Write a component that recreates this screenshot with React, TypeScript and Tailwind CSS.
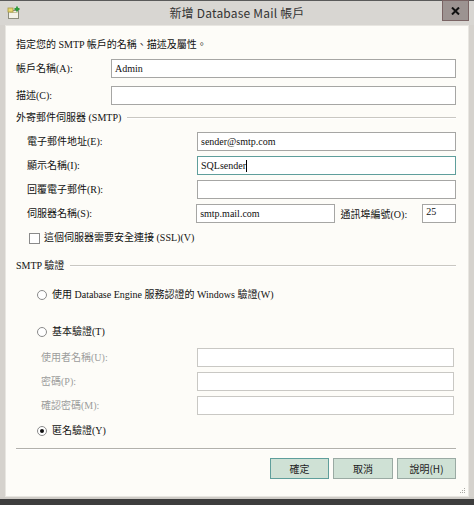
import React from "react";

const body = "font-['Liberation_Serif','Noto_Sans_CJK_TC',serif] text-[10px] leading-[14px] text-[#111]";

function Field({ value, className = "", focused = false, disabled = false, caret = false }: {
  value?: string;
  className?: string;
  focused?: boolean;
  disabled?: boolean;
  caret?: boolean;
}) {
  return (
    <div
      className={
        "h-[19px] flex items-center px-[3px] bg-white border " +
        (focused ? "border-[#5f9e9b] " : disabled ? "border-[#c9c8c4] " : "border-[#a6a6a4] ") +
        className
      }
    >
      <span className="whitespace-nowrap">{value}</span>
      {caret && <span className="w-px h-[12px] bg-black" />}
    </div>
  );
}

function Radio({ checked = false, label }: { checked?: boolean; label: string }) {
  return (
    <div className="ml-[21px] h-[14px] flex items-center gap-[5px]">
      <span className="w-[10px] h-[10px] rounded-full border border-[#8a8a8a] bg-white flex items-center justify-center">
        {checked && <span className="w-[4px] h-[4px] rounded-full bg-[#111]" />}
      </span>
      <span>{label}</span>
    </div>
  );
}

function GroupHeader({ title }: { title: string }) {
  return (
    <div className="h-[14px] flex items-center gap-[6px]">
      <span className="whitespace-nowrap">{title}</span>
      <div className="flex-1 border-t border-[#c9c7c2] border-b border-b-white" />
    </div>
  );
}

export default function App() {
  return (
    <div className="w-[474px] h-[505px] bg-[#d5d2cd] flex flex-col overflow-hidden">
      {/* title bar */}
      <div className="h-[25px] border-t border-[#5a5a5a] bg-[#d8d6d2] relative flex items-center justify-center shrink-0">
        <svg className="absolute left-[7px] top-[5px]" width="14" height="14" viewBox="0 0 14 14">
          <rect x="1.5" y="4.5" width="10" height="8" fill="#f4f2e8" stroke="#8c8c7c" />
          <rect x="2.5" y="6" width="8" height="1" fill="#c7c39a" />
          <rect x="1" y="2" width="5" height="4" fill="#e8d872" stroke="#a89a40" strokeWidth="0.8" />
          <path d="M10 0.5v5M7.5 3h5" stroke="#2e9a3a" strokeWidth="1.8" />
        </svg>
        <span className="font-['Noto_Sans_CJK_TC',sans-serif] text-[12px] text-[#333] tracking-[0.2px]">
          新增 Database Mail 帳戶
        </span>
        <div className="absolute right-[5px] -top-px w-[27px] h-[21px] bg-[#9c9391] border border-[#7a6464] flex items-center justify-center">
          <svg width="9" height="8" viewBox="0 0 9 8">
            <path d="M1 0.5l7 7M8 0.5l-7 7" stroke="#111" strokeWidth="2" />
          </svg>
        </div>
      </div>

      {/* client area */}
      <div className={"ml-[5px] w-[464px] h-[472px] bg-[#fdfcf8] border border-[#e8e6e1] pl-[10px] pr-[12px] flex flex-col relative shrink-0 " + body}>
        <div className="mt-[12px] h-[14px]">指定您的 SMTP 帳戶的名稱、描述及屬性。</div>

        <div className="mt-[7px] flex items-center">
          <span className="w-[95px]">帳戶名稱(A):</span>
          <Field value="Admin" className="flex-1" />
        </div>
        <div className="mt-[8px] flex items-center">
          <span className="w-[95px]">描述(C):</span>
          <Field className="flex-1" />
        </div>

        <div className="mt-[6px]">
          <GroupHeader title="外寄郵件伺服器 (SMTP)" />
        </div>

        <div className="mt-[7px] ml-[11px] flex items-center">
          <span className="w-[170px]">電子郵件地址(E):</span>
          <Field value="sender@smtp.com" className="flex-1" />
        </div>
        <div className="mt-[5px] ml-[11px] flex items-center">
          <span className="w-[170px]">顯示名稱(I):</span>
          <Field value="SQLsender" focused caret className="flex-1" />
        </div>
        <div className="mt-[5px] ml-[11px] flex items-center">
          <span className="w-[170px]">回覆電子郵件(R):</span>
          <Field className="flex-1" />
        </div>
        <div className="mt-[5px] ml-[11px] flex items-center">
          <span className="w-[170px]">伺服器名稱(S):</span>
          <Field value="smtp.mail.com" className="w-[139px]" />
          <span className="ml-[6px] w-[82px] pt-[2px]">通訊埠編號(O):</span>
          <Field value="25" className="w-[34px] !items-start" />
        </div>

        <div className="mt-[8px] ml-[13px] h-[14px] flex items-center gap-[4px]">
          <span className="w-[11px] h-[11px] border border-[#8a8a8a] bg-white" />
          <span>這個伺服器需要安全連接 (SSL)(V)</span>
        </div>

        <div className="mt-[14px]">
          <GroupHeader title="SMTP 驗證" />
        </div>

        <div className="mt-[15px]">
          <Radio label="使用 Database Engine 服務認證的 Windows 驗證(W)" />
        </div>
        <div className="mt-[23px]">
          <Radio label="基本驗證(T)" />
        </div>

        <div className="mt-[9px] ml-[25px] mr-[2px] flex items-center text-[#9c9c9c]">
          <span className="w-[156px]">使用者名稱(U):</span>
          <Field disabled className="flex-1" />
        </div>
        <div className="mt-[5px] ml-[25px] mr-[2px] flex items-center text-[#9c9c9c]">
          <span className="w-[156px]">密碼(P):</span>
          <Field disabled className="flex-1" />
        </div>
        <div className="mt-[5px] ml-[25px] mr-[2px] flex items-center text-[#9c9c9c]">
          <span className="w-[156px]">確認密碼(M):</span>
          <Field disabled className="flex-1" />
        </div>

        <div className="mt-[9px]">
          <Radio checked label="匿名驗證(Y)" />
        </div>

        <div className="mt-[10px] border-t border-[#b2b1ac] border-b border-b-white" />

        <div className="mt-[8px] flex justify-end gap-[4px] font-['Noto_Sans_CJK_TC',sans-serif]">
          <button className="w-[59px] h-[21px] bg-[#cfe1d5] border border-[#5f9e9b] text-[10px] text-[#222]">確定</button>
          <button className="w-[60px] h-[21px] bg-[#cfe1d5] border border-[#9aaaa3] text-[10px] text-[#222]">取消</button>
          <button className="w-[59px] h-[21px] bg-[#cfe1d5] border border-[#9aaaa3] text-[10px] text-[#222]">說明(H)</button>
        </div>

        <svg className="absolute right-[2px] bottom-[2px]" width="7" height="7" viewBox="0 0 7 7">
          <rect x="5" y="1" width="1" height="1" fill="#a8a8a4" />
          <rect x="3" y="3" width="1" height="1" fill="#a8a8a4" />
          <rect x="5" y="3" width="1" height="1" fill="#a8a8a4" />
          <rect x="1" y="5" width="1" height="1" fill="#a8a8a4" />
          <rect x="3" y="5" width="1" height="1" fill="#a8a8a4" />
          <rect x="5" y="5" width="1" height="1" fill="#a8a8a4" />
        </svg>
      </div>

      <div className="h-[2px] bg-[#cfccc7] shrink-0" />
      <div className="flex-1 bg-[#3d3d3d]" />
    </div>
  );
}
